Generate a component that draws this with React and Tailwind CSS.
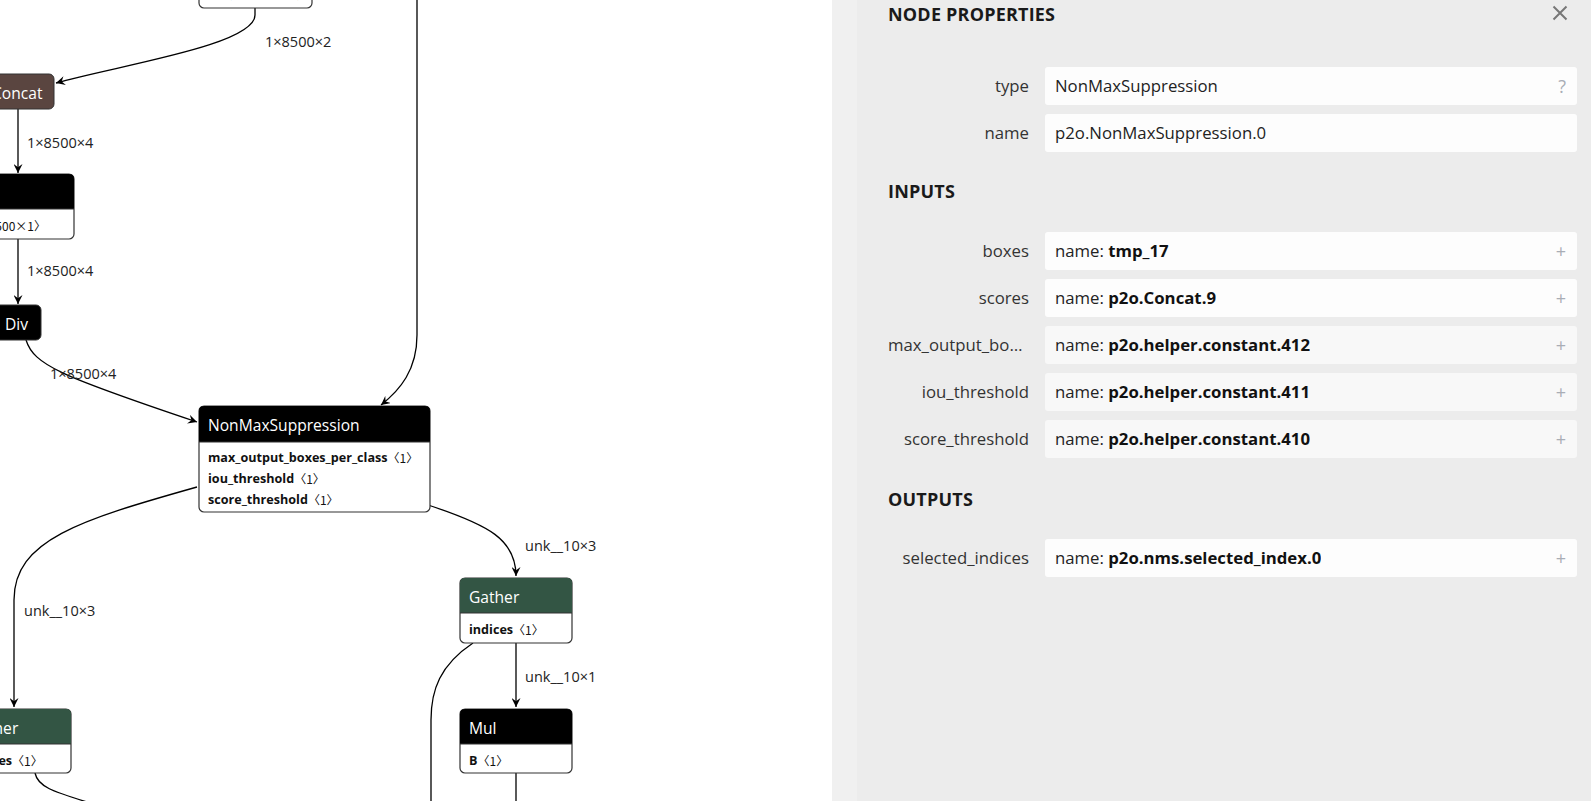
import React from "react";

const EDGE = "#000";

/* 〈…〉 drawn with a font that has the angle brackets */
function Shape({ children }) {
  return (
    <tspan fontFamily="'Noto Sans CJK JP', 'DejaVu Sans', sans-serif" fontSize="12" fontWeight="400">
      {children}
    </tspan>
  );
}

/* node with coloured header and optional attribute rows */
function Node({ x, y, w, head = 35, color = "#000", title, titleX, rows = [], rowH = 21, bodyPad = 0, anchorEnd }) {
  const r = 5;
  const bodyH = rows.length ? rows.length * rowH + bodyPad : 0;
  const h = head + bodyH;
  const headPath = rows.length
    ? `M${x},${y + head} L${x},${y + r} Q${x},${y} ${x + r},${y} L${x + w - r},${y} Q${x + w},${y} ${x + w},${y + r} L${x + w},${y + head} Z`
    : null;
  return (
    <g>
      {rows.length ? (
        <>
          <rect x={x} y={y} width={w} height={h} rx={r} fill="#fff" stroke="#333" strokeWidth="1.2" />
          <path d={headPath} fill={color} />
          <line x1={x} y1={y + head} x2={x + w} y2={y + head} stroke="#333" strokeWidth="1" />
        </>
      ) : (
        <rect x={x} y={y} width={w} height={h} rx={r} fill={color} stroke="#333" strokeWidth="1" />
      )}
      <text x={titleX} y={y + head / 2 + 1} fill="#fff" fontSize="15.6" dominantBaseline="central">
        {title}
      </text>
      {rows.map((row, i) => (
        <text
          key={i}
          x={anchorEnd ? anchorEnd : titleX}
          textAnchor={anchorEnd ? "end" : "start"}
          y={y + head + bodyPad / 2 + rowH * i + rowH / 2 + 1}
          fontSize="12.6"
          fill="#111"
          dominantBaseline="central"
        >
          <tspan fontWeight="700">{row[0]}</tspan>
          <Shape>{row[1]}</Shape>
        </text>
      ))}
    </g>
  );
}

function Label({ x, y, children }) {
  return (
    <text x={x} y={y} fontSize="14.5" fill="#222" dominantBaseline="central">
      {children}
    </text>
  );
}

function Graph() {
  return (
    <svg width="832" height="801" className="block">
      <defs>
        <marker id="arr" viewBox="0 0 10 10" refX="10" refY="5" markerWidth="9" markerHeight="9" orient="auto" markerUnits="userSpaceOnUse">
          <path d="M0,0 L10,5 L0,10 L3.5,5 Z" fill="#000" />
        </marker>
      </defs>

      {/* edges */}
      <g fill="none" stroke={EDGE} strokeWidth="1.3">
        <path d="M255,8 L255,15 C255,45 120,65 56,83" markerEnd="url(#arr)" />
        <path d="M18,109 L18,173" markerEnd="url(#arr)" />
        <path d="M18,239 L18,304" markerEnd="url(#arr)" />
        <path d="M26,340 C34,365 60,376 197,422" markerEnd="url(#arr)" />
        <path d="M417,-5 L417,335 C417,370 400,390 381,405" markerEnd="url(#arr)" />
        <path d="M197,487 C80,520 14,540 14,600 L14,707" markerEnd="url(#arr)" />
        <path d="M35,773 C38,788 55,792 100,806" />
        <path d="M425,504 C490,525 516,540 516,576" markerEnd="url(#arr)" />
        <path d="M516,643 L516,707" markerEnd="url(#arr)" />
        <path d="M473,643 C440,665 431,690 431,720 L431,805" />
        <path d="M516,773 L516,805" />
      </g>

      {/* top node, mostly out of view */}
      <g>
        <rect x="199" y="-40" width="113" height="48" rx="5" fill="#fff" stroke="#333" strokeWidth="1.2" />
        <text x="212" y="-6" fontSize="12.6" fill="#111" dominantBaseline="central">
          <tspan fontWeight="700">B</tspan>
          <Shape>〈1×8500×1〉</Shape>
        </text>
      </g>

      <Node x={-12} y={74} w={66} color="#5a4540" title="Concat" titleX={-8} />
      <Node x={-40} y={174} w={114} head={35} title="Sub" titleX={-60} rows={[["B", "〈1×8500×1〉"]]} rowH={30} anchorEnd={46} />
      <Node x={-20} y={305} w={61} title="Div" titleX={5} />
      <Node
        x={199}
        y={406}
        w={231}
        head={36}
        title="NonMaxSuppression"
        titleX={208}
        rows={[
          ["max_output_boxes_per_class", "〈1〉"],
          ["iou_threshold", "〈1〉"],
          ["score_threshold", "〈1〉"],
        ]}
        rowH={21}
        bodyPad={7}
      />
      <Node x={-60} y={709} w={131} color="#335544" title="Gather" titleX={-32} rows={[["indices", "〈1〉"]]} rowH={29} />
      <Node x={460} y={578} w={112} color="#335544" title="Gather" titleX={469} rows={[["indices", "〈1〉"]]} rowH={30} />
      <Node x={460} y={709} w={112} title="Mul" titleX={469} rows={[["B", "〈1〉"]]} rowH={29} />

      <Label x={265} y={41}>1×8500×2</Label>
      <Label x={27} y={142}>1×8500×4</Label>
      <Label x={27} y={270}>1×8500×4</Label>
      <Label x={50} y={373}>1×8500×4</Label>
      <Label x={24} y={610}>unk__10×3</Label>
      <Label x={525} y={545}>unk__10×3</Label>
      <Label x={525} y={676}>unk__10×1</Label>
      <Label x={92} y={808}>unk__10×1</Label>
      <Label x={525} y={808}>unk__10×1</Label>
    </svg>
  );
}

function Row({ label, name, value, mark = "+", init, className = "mt-[9px]" }) {
  return (
    <div className={`flex items-center ${className}`}>
      <div className="w-[141px] shrink-0 truncate text-right text-[#333]">{label}</div>
      <div
        className={`ml-[16px] flex h-[38px] min-w-0 flex-1 items-center justify-between rounded-[3px] pl-[10px] pr-[11px] ${
          init ? "bg-[#f8f8f8]" : "bg-[#fdfdfd]"
        }`}
      >
        <span className="truncate text-[#222]">
          {name}
          {value && <b className="font-bold text-[#111]">{value}</b>}
        </span>
        <span className="text-[18px] text-[#a9adb5]">{mark}</span>
      </div>
    </div>
  );
}

function Heading({ children, className }) {
  return <div className={`text-[18px] font-bold leading-[24px] tracking-[0.2px] text-[#1a1a1a] ${className}`}>{children}</div>;
}

export default function App() {
  return (
    <div className="flex h-[801px] w-[1591px] overflow-hidden font-['Open_Sans',sans-serif]">
      <div className="w-[832px] shrink-0 bg-white">
        <Graph />
      </div>

      <div className="w-[25px] shrink-0 bg-[#f0f0f0]" />

      {/* NODE PROPERTIES panel */}
      <div className="relative min-w-0 flex-1 bg-[#ececec] pl-[31px] pr-[14px] text-[16.75px] leading-[24px]">
        <button className="absolute right-[23px] top-[5px] h-[16px] w-[16px]">
          <svg viewBox="0 0 16 16" width="16" height="16">
            <path d="M1.5,1.5 L14.5,14.5 M14.5,1.5 L1.5,14.5" stroke="#777" strokeWidth="2" />
          </svg>
        </button>

        <Heading className="pt-[2px]">NODE PROPERTIES</Heading>
        <Row className="mt-[41px]" label="type" name="NonMaxSuppression" mark="?" />
        <Row label="name" name="p2o.NonMaxSuppression.0" mark="" />

        <Heading className="mt-[27px]">INPUTS</Heading>
        <Row className="mt-[29px]" label="boxes" name="name: " value="tmp_17" />
        <Row label="scores" name="name: " value="p2o.Concat.9" />
        <Row label="max_output_boxes_per_class" name="name: " value="p2o.helper.constant.412" init />
        <Row label="iou_threshold" name="name: " value="p2o.helper.constant.411" init />
        <Row label="score_threshold" name="name: " value="p2o.helper.constant.410" init />

        <Heading className="mt-[29px]">OUTPUTS</Heading>
        <Row className="mt-[28px]" label="selected_indices" name="name: " value="p2o.nms.selected_index.0" />
      </div>
    </div>
  );
}
